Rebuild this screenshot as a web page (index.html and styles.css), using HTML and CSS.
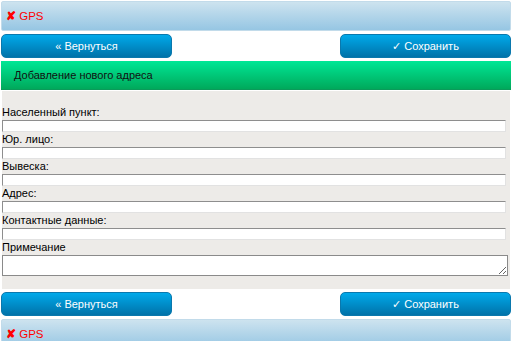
FILE: index.html
```html
<!DOCTYPE html>
<html lang="ru">
<head>
    <meta charset="UTF-8">
    <title>Добавление нового адреса</title>
    <link rel="stylesheet" href="styles.css">
</head>
<body>
<div class="bar"><span class="gps"><b>&#10008;</b> GPS</span></div>
<div class="btn-row">
    <div class="btn">&laquo; Вернуться</div>
    <div class="btn">&#10003; Сохранить</div>
</div>
<div class="title">Добавление нового адреса</div>
<div class="form">
    <label>Населенный пункт:</label>
    <input type="text">
    <label>Юр. лицо:</label>
    <input type="text">
    <label>Вывеска:</label>
    <input type="text">
    <label>Адрес:</label>
    <input type="text">
    <label>Контактные данные:</label>
    <input type="text">
    <label>Примечание</label>
    <textarea></textarea>
</div>
<div class="btn-row">
    <div class="btn">&laquo; Вернуться</div>
    <div class="btn">&#10003; Сохранить</div>
</div>
<div class="bar"><span class="gps"><b>&#10008;</b> GPS</span></div>
</body>
</html>
```

FILE: styles.css
```css
*{
    margin: 0;
    padding: 0;
    box-sizing: border-box;
}
body{
    background-color: #ffffff;
    padding: 1px;
    font-family: "Liberation Sans", Arial, sans-serif;
    font-size: 11px;
}
.bar{
    height: 30px;
    border: 1px solid #c2dbea;
    border-radius: 2px;
    background: linear-gradient(#cde3ef, #96c6e3);
    display: flex;
    align-items: center;
    padding-left: 4px;
    font-size: 11.5px;
}
.gps{
    color: #ff0000;
}
.btn-row{
    display: flex;
    justify-content: space-between;
    margin: 3px 0;
}
.btn{
    width: 171px;
    height: 24px;
    border-radius: 5px;
    border: 1px solid #0a78ad;
    background: linear-gradient(#00a9ea, #0072a9);
    color: #ffffff;
    display: flex;
    align-items: center;
    justify-content: center;
}
.title{
    height: 29px;
    border-bottom: 1px solid #0b9a5a;
    background: linear-gradient(#00e796, #00a95b);
    padding-left: 13px;
    display: flex;
    align-items: center;
    color: #111;
    margin-bottom: 1px;
}
.form{
    background-color: #edebe8;
    margin: 0 1px;
    padding: 14px 0 13px 0;
}
.form label{
    display: block;
    height: 15px;
    line-height: 15px;
    color: #000;
}
.form input{
    display: block;
    width: 504px;
    height: 12px;
    border: 1px solid #e2e2e2;
    border-top-color: #8e8e8e;
    border-left-color: #8e8e8e;
    background: #ffffff;
}
.form textarea{
    display: block;
    width: 506px;
    height: 21px;
    border: 1px solid #8a8a8a;
    background: #ffffff;
}
```
